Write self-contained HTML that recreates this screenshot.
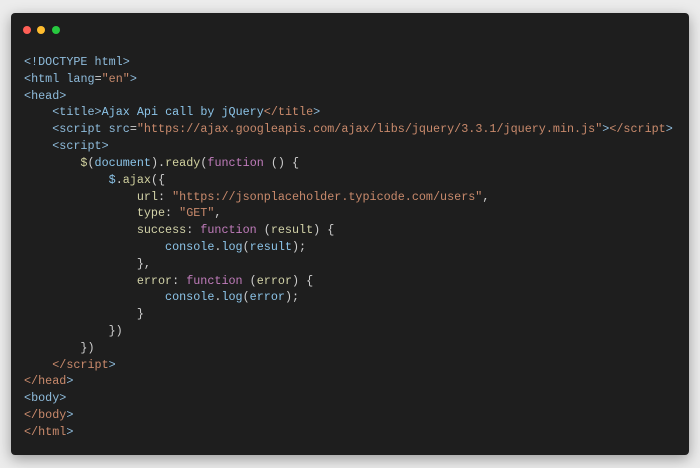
<!DOCTYPE html>
<html><head><style>
body{margin:0;width:700px;height:468px;background:#ececec;overflow:hidden;}
.win{position:absolute;left:11px;top:13px;width:678px;height:442px;background:#1e1e1e;border-radius:4px;box-shadow:0 4px 14px rgba(0,0,0,.35);}
.d{position:absolute;top:13px;width:8px;height:8px;border-radius:50%;}
pre{position:absolute;left:13px;top:41px;margin:0;font-family:"Liberation Mono",monospace;font-size:11.75px;line-height:16.82px;color:#cfcfcf;}
.g{color:#8fbcdc}.t{color:#8fbcdc}.a{color:#8fbcdc}.s{color:#c98a6c}.k{color:#c07cbb}.f{color:#d2d2a0}.x{color:#8cc4e8}.p{color:#d2d2a8}
</style></head><body>
<div class="win">
<div class="d" style="left:12px;background:#ff5f56"></div>
<div class="d" style="left:26px;background:#ffbd2e"></div>
<div class="d" style="left:41px;background:#27c93f"></div>
<pre><span class="g">&lt;!</span><span class="t">DOCTYPE</span> <span class="a">html</span><span class="g">&gt;</span>
<span class="g">&lt;</span><span class="t">html</span> <span class="a">lang</span>=<span class="s">"en"</span><span class="g">&gt;</span>
<span class="g">&lt;</span><span class="t">head</span><span class="g">&gt;</span>
    <span class="g">&lt;</span><span class="t">title</span><span class="g">&gt;</span><span class="x">Ajax Api call by jQuery</span><span class="s">&lt;/title</span><span class="g">&gt;</span>
    <span class="g">&lt;</span><span class="t">script</span> <span class="a">src</span>=<span class="s">"https://ajax.googleapis.com/ajax/libs/jquery/3.3.1/jquery.min.js"</span><span class="g">&gt;</span><span class="s">&lt;/script</span><span class="g">&gt;</span>
    <span class="g">&lt;</span><span class="t">script</span><span class="g">&gt;</span>
        <span class="f">$</span>(<span class="x">document</span>).<span class="f">ready</span>(<span class="k">function</span> () {
            <span class="x">$</span>.<span class="f">ajax</span>({
                <span class="p">url</span>: <span class="s">"https://jsonplaceholder.typicode.com/users"</span>,
                <span class="p">type</span>: <span class="s">"GET"</span>,
                <span class="p">success</span>: <span class="k">function</span> (<span class="p">result</span>) {
                    <span class="x">console</span>.<span class="x">log</span>(<span class="x">result</span>);
                },
                <span class="p">error</span>: <span class="k">function</span> (<span class="p">error</span>) {
                    <span class="x">console</span>.<span class="x">log</span>(<span class="x">error</span>);
                }
            })
        })
    <span class="s">&lt;/script</span><span class="g">&gt;</span>
<span class="s">&lt;/head</span><span class="g">&gt;</span>
<span class="g">&lt;</span><span class="t">body</span><span class="g">&gt;</span>
<span class="s">&lt;/body</span><span class="g">&gt;</span>
<span class="s">&lt;/html</span><span class="g">&gt;</span></pre>
</div>
</body></html>
